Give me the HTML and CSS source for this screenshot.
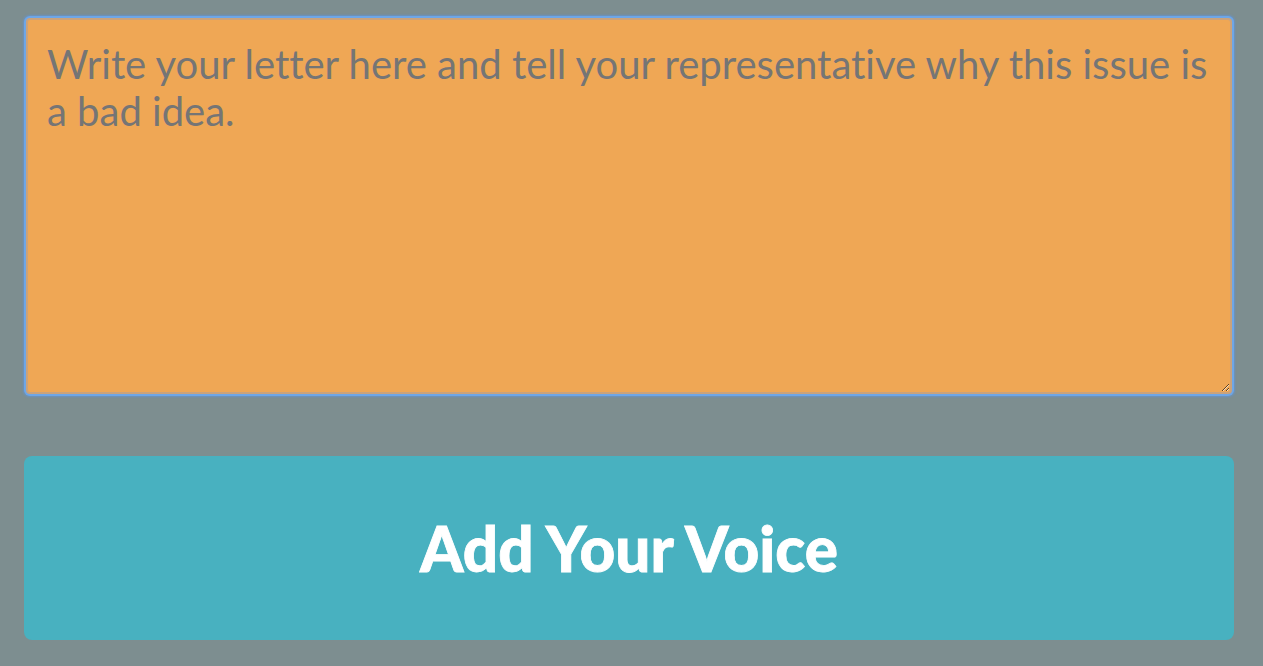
FILE: index.html
```html
<!DOCTYPE html>
<html>
<head>
<meta charset="utf-8">
<link rel="stylesheet" href="styles.css">
</head>
<body>
<form class="letter-form">
  <textarea class="letter" placeholder="Write your letter here and tell your representative why this issue is a bad idea."></textarea>
  <button type="button" class="submit">Add Your Voice</button>
</form>
</body>
</html>
```
FILE: styles.css
```css
html, body {
  margin: 0;
  padding: 0;
  background: #7d8e90;
  height: 100%;
}
.letter-form {
  display: flex;
  flex-direction: column;
  gap: 62px;
  padding: 18px 31px 0 26px;
}
.letter {
  box-sizing: border-box;
  width: 100%;
  height: 376px;
  margin: 0;
  padding: 21px 8px 19px 19px;
  background: #efa755;
  border: 2px solid #c9a27c;
  border-radius: 4px;
  box-shadow: 0 0 0 2px #6ea6e6, 0 0 2px 3px rgba(90, 150, 230, 0.6);
  outline: none;
  font-family: Lato, "Open Sans", sans-serif;
  font-size: 40px;
  line-height: 47px;
  font-variant-ligatures: none;
  color: #333;
}
.letter::placeholder {
  color: #757575;
  opacity: 1;
}
.submit {
  margin: 0 -2px;
  height: 184px;
  border: none;
  border-radius: 8px;
  background: #48b1c0;
  color: #ffffff;
  font-family: Lato, "Open Sans", sans-serif;
  font-weight: 900;
  font-size: 62px;
  -webkit-text-stroke: 0.8px #ffffff;
  cursor: pointer;
}
```
